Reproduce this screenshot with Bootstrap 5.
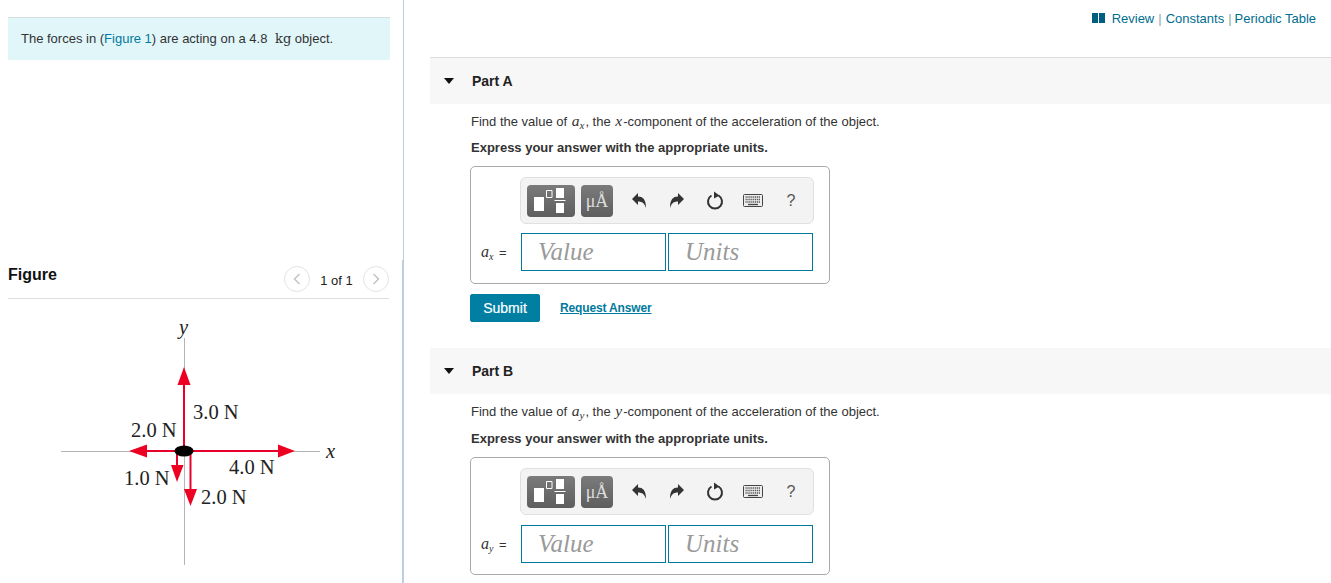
<!DOCTYPE html>
<html lang="en">
<head>
    <meta charset="UTF-8">
    <meta name="viewport" content="width=device-width, initial-scale=1.0">
    <title>Forces on an object</title>
    <link href="https://cdn.jsdelivr.net/npm/bootstrap@5.3.2/dist/css/bootstrap.min.css" rel="stylesheet">
    <style>
        html, body { height: 100%; }
        body { font-family: "Liberation Sans", Arial, sans-serif; font-size: 13px; color: #333; overflow: hidden; background: #fff; }
        a { color: #007a9e; text-decoration: none; }
        .serif-math { font-family: "Liberation Serif", serif; font-style: italic; font-size: 15.5px; margin: 0 1px; }
        .serif-math sub { font-size: 11px; bottom: -.25em; }
        .kg-unit { font-family: "DejaVu Serif", serif; font-size: 13px; margin: 0 0 0 4px; }

        .pane-left { width: 404px; height: 583px; }
        .problem-area { height: 260px; padding: 17px 13px 0 8px; border-right: 1px solid #bccfde; }
        .problem-note { height: 43px; padding: 12px 0 0 13px; line-height: 17px; background: #e0f6f9; border-top: 1px solid #d5dfe0; }
        .figure-area { padding: 0 13px 0 8px; border-right: 2px solid #bccfde; }
        .figure-head { height: 39px; border-bottom: 1px solid #ddd; }
        .figure-title { font-size: 16px; font-weight: 700; color: #111; margin-bottom: 8px; }
        .pager-text { font-size: 13px; width: 53px; text-align: center; color: #222; margin-top: 3px; }
        .pager-btn { width: 26px; height: 26px; border: 1px solid #e3e3e3; border-radius: 50%; padding: 0; background: #fff; line-height: 0; }
        .figure-svg { display: block; margin: 0 0 0 -8px; }
        .figure-svg text { font-family: "Liberation Serif", serif; font-size: 20.5px; fill: #222; }

        .pane-right { min-width: 0; }
        .top-links { height: 57px; padding: 11px 15px 0 0; line-height: 15px; color: #8aa; }
        .top-links a { margin: 0 3px; color: #006d90; }
        .top-links a.link-review { margin-right: 4px; }
        .top-links a.link-constants { margin: 0 4px; }
        .top-links a:last-child { margin-right: 0; }
        .book-icon { margin: 2px 4px 0 0; }
        .part-head { height: 46px; background: #f7f7f7; padding-left: 14px; margin-left: 26px; font-size: 14px; font-weight: 700; color: #222; }
        .part-first { height: 47px; border-top: 1px solid #ddd; }
        .part-b { margin-top: 26px; }
        .part-caret { width: 0; height: 0; border-left: 5.5px solid transparent; border-right: 5.5px solid transparent; border-top: 6px solid #111; margin-right: 18px; }
        .part-body { padding-left: 66px; }
        .part-text { line-height: 17px; padding-left: 1px; }
        .first-line { margin: 8px 0 0; }
        .second-line { margin: 9px 0 10px; font-weight: 700; }
        .part-b + .part-body .second-line { margin-top: 10px; }
        .answer-box { width: 360px; height: 118px; border: 1px solid #aaa; border-radius: 5px; padding: 10px 16px 0 0; }
        .math-toolbar { width: 294px; height: 47px; margin-left: 49px; background: #f3f3f3; border: 1px solid #e0e0e0; border-radius: 6px; padding-left: 6px; }
        .tool-dark { height: 32px; border-radius: 4px; background: linear-gradient(#7b7b7b, #5e5e5e); line-height: 0; }
        .tool-unit { width: 32px; margin-left: 6px; margin-right: 7px; color: #ddd; font-family: "Liberation Serif", serif; font-size: 18px; line-height: 32px; text-align: center; }
        .tool-icon { width: 38px; text-align: center; line-height: 0; }
        .tool-help { font-size: 16px; line-height: 20px; color: #555; }
        .answer-row { margin-top: 9px; }
        .part-b + .part-body .answer-row { margin-top: 10px; }
        .answer-label { width: 50px; padding-left: 10px; font-size: 13px; color: #333; }
        .answer-label .serif-math { font-size: 16px; margin: 0 2px 0 0; }
        .answer-label sub { font-size: 10px; }
        .answer-input.form-control { width: 145px; height: 38px; padding: 0 0 0 16px; border: 1px solid #007a9e; border-radius: 0; font-family: "Liberation Serif", serif; font-style: italic; font-size: 25px; }
        .answer-input.form-control::placeholder { color: #9a9a9a; opacity: 1; }
        .submit-row { margin-top: 10px; }
        .btn-submit.btn { width: 70px; height: 28px; padding: 0; background: #007fa3; border: 1px solid #007fa3; border-radius: 2px; color: #fff; font-size: 14px; font-weight: 400; -webkit-text-stroke: .2px #fff; }
        .request-link { font-size: 12px; font-weight: 700; text-decoration: underline; margin-left: 20px; letter-spacing: -.15px; }
    </style>
</head>
<body>
<svg width="0" height="0" class="position-absolute">
    <symbol id="i-undo" viewBox="0 0 14 15"><path d="M0 6 L6 0 V3.5 C11 3.5 14 6.5 14 15 C12.500 10.500 10.500 8.500 6 8.500 V12 Z" fill="#333"/></symbol>
    <symbol id="i-redo" viewBox="0 0 14 15"><path d="M14 6 L8 0 V3.500 C3 3.500 0 6.500 0 15 C1.500 10.500 3.500 8.500 8 8.500 V12 Z" fill="#333"/></symbol>
    <symbol id="i-reset" viewBox="0 0 18 19"><path d="M5.500 4.500 A7 7 0 1 0 12.500 4.500" fill="none" stroke="#333" stroke-width="2"/><path d="M8 0.500 L13.500 4.500 L8 7.500 Z" fill="#333"/></symbol>
    <symbol id="i-keys" viewBox="0 0 20 13"><rect x=".5" y=".5" width="19" height="12" rx="1" fill="#eee" stroke="#444"/><path d="M2.500 3 H17.500 M2.500 5.500 H17.500 M2.500 8 H17.500" stroke="#555" stroke-width="1.300" stroke-dasharray="1.200 .7"/><path d="M5 10.500 H15" stroke="#444" stroke-width="1.300"/></symbol>
    <symbol id="i-templates" viewBox="0 0 48 32"><path d="M7 12 H17 V26 H7 Z M29 3 H37 V13 H29 Z M29 18 H37 V28 H29 Z" fill="#fff"/><path d="M19.500 5.500 H25 V12.500 H19.500 Z" fill="none" stroke="#fff"/><path d="M27.500 15.500 H38.500" stroke="#fff"/></symbol>
</svg>
<main class="d-flex">
    <section class="pane-left flex-shrink-0 d-flex flex-column">
        <div class="problem-area">
            <div class="problem-note">The forces in (<a href="#">Figure 1</a>) are acting on a 4.8 <span class="kg-unit">kg</span> object.</div>
        </div>
        <div class="figure-area flex-grow-1">
            <div class="figure-head d-flex align-items-center justify-content-between">
                <div class="figure-title">Figure</div>
                <div class="d-flex align-items-center">
                    <button class="pager-btn" type="button" aria-label="Previous"><svg width="10" height="14" viewBox="0 0 10 14"><path d="M7.500 2 L2.500 7 L7.500 12" fill="none" stroke="#c4c4c4" stroke-width="1.500"/></svg></button>
                    <span class="pager-text">1 of 1</span>
                    <button class="pager-btn" type="button" aria-label="Next"><svg width="10" height="14" viewBox="0 0 10 14"><path d="M2.500 2 L7.500 7 L2.500 12" fill="none" stroke="#c4c4c4" stroke-width="1.500"/></svg></button>
                </div>
            </div>
            <!-- svg starts at page y=299 -->
            <svg class="figure-svg" width="390" height="284" viewBox="0 299 390 284">
                <path d="M184.500 338 V565 M61 451.500 H320" stroke="#b5b5b5" stroke-width="1"/>
                <text x="179" y="334" style="font-style:italic">y</text>
                <text x="326" y="458" style="font-style:italic">x</text>
                <g stroke="#e8002d" stroke-width="2">
                    <path d="M184 451 V384"/>
                    <path d="M184 451 H146"/>
                    <path d="M184 451 H279"/>
                    <path d="M177 451 V466"/>
                    <path d="M190.500 451 V490"/>
                </g>
                <g fill="#ee0022">
                    <path d="M184 367 L190.500 385 H177.500 Z"/>
                    <path d="M129 451 L147 444.500 V457.500 Z"/>
                    <path d="M295 451 L278 444.500 V457.500 Z"/>
                    <path d="M177 482 L171 465 H183.500 Z"/>
                    <path d="M190.500 506 L184 489 H197 Z"/>
                </g>
                <ellipse cx="184" cy="451" rx="9.500" ry="5.500" fill="#000"/>
                <text x="193" y="419">3.0 N</text>
                <text x="131" y="437">2.0 N</text>
                <text x="229" y="474">4.0 N</text>
                <text x="124" y="485">1.0 N</text>
                <text x="201" y="504">2.0 N</text>
            </svg>
        </div>
    </section>

    <section class="pane-right flex-grow-1">
        <div class="top-links d-flex justify-content-end align-items-start">
            <svg class="book-icon" width="13" height="10" viewBox="0 0 13 10"><path d="M0 0 H6 V10 H0 Z M7 0 H13 V10 H7 Z" fill="#005f7f"/></svg>
            <a class="link-review" href="#">Review</a>|<a class="link-constants" href="#">Constants</a>|<a href="#">Periodic Table</a>
        </div>

        <div class="part-head part-first d-flex align-items-center"><span class="part-caret"></span>Part A</div>
        <div class="part-body">
            <p class="part-text first-line">Find the value of <span class="serif-math">a<sub>x</sub></span>, the <span class="serif-math">x</span>-component of the acceleration of the object.</p>
            <p class="part-text second-line">Express your answer with the appropriate units.</p>
            <div class="answer-box">
                <div class="math-toolbar d-flex align-items-center">
                    <div class="tool-dark"><svg width="48" height="32"><use href="#i-templates"/></svg></div>
                    <div class="tool-dark tool-unit">μÅ</div>
                    <div class="tool-icon"><svg width="14" height="15"><use href="#i-undo"/></svg></div>
                    <div class="tool-icon"><svg width="14" height="15"><use href="#i-redo"/></svg></div>
                    <div class="tool-icon"><svg width="18" height="19"><use href="#i-reset"/></svg></div>
                    <div class="tool-icon"><svg width="20" height="13"><use href="#i-keys"/></svg></div>
                    <div class="tool-icon tool-help">?</div>
                </div>
                <div class="answer-row d-flex align-items-center">
                    <div class="answer-label"><span class="serif-math">a<sub>x</sub></span> =</div>
                    <input class="answer-input form-control" type="text" placeholder="Value">
                    <input class="answer-input form-control ms-auto" type="text" placeholder="Units">
                </div>
            </div>
            <div class="submit-row d-flex align-items-center">
                <button class="btn btn-submit" type="button">Submit</button>
                <a class="request-link" href="#">Request Answer</a>
            </div>
        </div>

        <div class="part-head d-flex align-items-center part-b"><span class="part-caret"></span>Part B</div>
        <div class="part-body">
            <p class="part-text first-line">Find the value of <span class="serif-math">a<sub>y</sub></span>, the <span class="serif-math">y</span>-component of the acceleration of the object.</p>
            <p class="part-text second-line">Express your answer with the appropriate units.</p>
            <div class="answer-box">
                <div class="math-toolbar d-flex align-items-center">
                    <div class="tool-dark"><svg width="48" height="32"><use href="#i-templates"/></svg></div>
                    <div class="tool-dark tool-unit">μÅ</div>
                    <div class="tool-icon"><svg width="14" height="15"><use href="#i-undo"/></svg></div>
                    <div class="tool-icon"><svg width="14" height="15"><use href="#i-redo"/></svg></div>
                    <div class="tool-icon"><svg width="18" height="19"><use href="#i-reset"/></svg></div>
                    <div class="tool-icon"><svg width="20" height="13"><use href="#i-keys"/></svg></div>
                    <div class="tool-icon tool-help">?</div>
                </div>
                <div class="answer-row d-flex align-items-center">
                    <div class="answer-label"><span class="serif-math">a<sub>y</sub></span> =</div>
                    <input class="answer-input form-control" type="text" placeholder="Value">
                    <input class="answer-input form-control ms-auto" type="text" placeholder="Units">
                </div>
            </div>
        </div>
    </section>
</main>
<script src="https://cdn.jsdelivr.net/npm/bootstrap@5.3.2/dist/js/bootstrap.bundle.min.js"></script>
</body>
</html>
